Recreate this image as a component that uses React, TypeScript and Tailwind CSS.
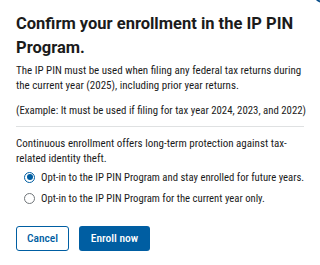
import { useState } from 'react';

const options = [
  { id: 'future', label: 'Opt-in to the IP PIN Program and stay enrolled for future years.' },
  { id: 'current', label: 'Opt-in to the IP PIN Program for the current year only.' },
];

export default function App() {
  const [choice, setChoice] = useState('future');

  return (
    <div className="relative w-[320px] h-[265px] overflow-hidden bg-white text-[#1b1b1b] font-['Roboto_Condensed',Roboto,sans-serif]">
      {/* close button peeking in from the corner */}
      <div className="absolute -top-[17px] -right-[13px] w-[20px] h-[20px] rounded-full border-2 border-[#0b4f8a]" />

      <div className="px-4 pt-[12px]">
        <h1 className="font-['Roboto',sans-serif] text-[16.5px] leading-[24px] font-bold">
          Confirm your enrollment in the IP PIN Program.
        </h1>

        <p className="mt-[3px] text-[11px] leading-[15px]">
          The IP PIN must be used when filing any federal tax returns during the current year (2025), including prior
          year returns.
        </p>

        <p className="mt-[10px] text-[10.8px] leading-[15px] whitespace-nowrap">
          (Example: It must be used if filing for tax year 2024, 2023, and 2022)
        </p>

        <div className="mt-[8px] border-t border-[#dfe1e2]" />

        <p className="mt-[9px] text-[11px] leading-[15px]">
          Continuous enrollment offers long-term protection against tax-related identity theft.
        </p>

        <div className="mt-[3px] flex flex-col gap-[5px] pl-[8px]">
          {options.map((o) => {
            const on = choice === o.id;
            return (
              <label key={o.id} className="h-[16px] flex items-center gap-[6px] text-[10.7px] leading-[15px] cursor-pointer">
                <button
                  type="button"
                  onClick={() => setChoice(o.id)}
                  className={`w-[11px] h-[11px] shrink-0 rounded-full flex items-center justify-center ${
                    on ? 'border-[1.5px] border-[#005ea2]' : 'border border-[#71767a]'
                  }`}
                >
                  {on && <span className="w-[6px] h-[6px] rounded-full bg-[#005ea2]" />}
                </button>
                <span className="whitespace-nowrap">{o.label}</span>
              </label>
            );
          })}
        </div>

        <div className="mt-[20px] flex gap-[10px]">
          <button className="w-[53px] h-[25px] rounded-[3px] border-[1.5px] border-[#005ea2] text-[#005ea2] text-[11.5px] font-medium">
            Cancel
          </button>
          <button className="w-[71px] h-[25px] rounded-[3px] bg-[#005ea2] text-white text-[11.5px] font-medium">
            Enroll now
          </button>
        </div>
      </div>
    </div>
  );
}
